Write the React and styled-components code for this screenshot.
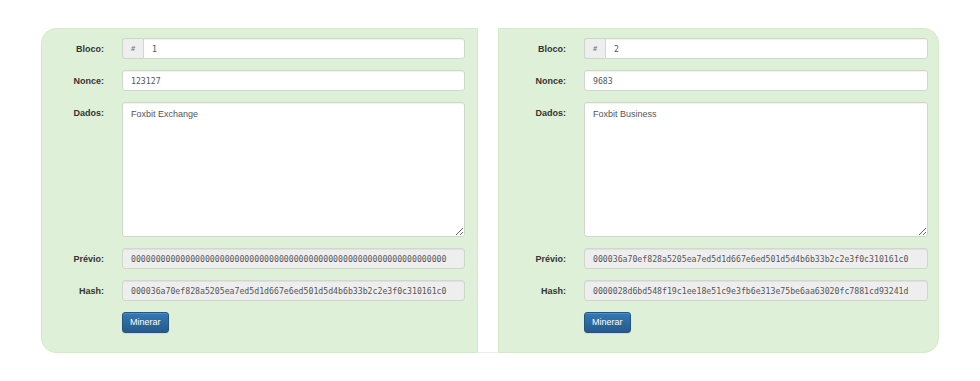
import React from 'react';
import styled, { createGlobalStyle } from 'styled-components';

const GlobalStyle = createGlobalStyle`
  html, body {
    margin: 0;
    padding: 0;
    background: #fff;
    font-family: "Liberation Sans", Arial, sans-serif;
  }
`;

const Page = styled.div`
  display: flex;
  padding: 28px 0 0 41px;
`;

const Card = styled.div`
  box-sizing: border-box;
  width: ${p => p.width}px;
  height: 325px;
  padding: 9px ${p => p.padRight}px 0 0;
  background: #dff0d8;
  border: 1px solid #d6e9c6;
  border-radius: ${p => p.side === 'left' ? '15px 0 0 15px' : '0 15px 15px 0'};
  display: grid;
  grid-template-columns: ${p => p.labelCol}px 1fr;
  grid-auto-rows: min-content;
  column-gap: 18px;
  row-gap: 11px;
`;

const Divider = styled.div`
  width: 20px;
  height: 325px;
  box-sizing: border-box;
  border-bottom: 1px solid #ececec;
  background: #fff;
`;

const Label = styled.label`
  text-align: right;
  font-size: 9px;
  font-weight: bold;
  color: #333;
  padding-top: 6px;
  line-height: 11px;
`;

const Group = styled.div`
  display: flex;
  height: 21px;
`;

const Addon = styled.span`
  box-sizing: border-box;
  width: 21px;
  display: flex;
  align-items: center;
  justify-content: center;
  background: #eee;
  border: 1px solid #ccd6c8;
  border-right: none;
  border-radius: 3px 0 0 3px;
  color: #777;
  font-size: 7px;
  font-family: "DejaVu Sans Mono", monospace;
`;

const Input = styled.input`
  box-sizing: border-box;
  flex: 1;
  min-width: 0;
  width: 100%;
  height: 21px;
  margin: 0;
  padding: 0 8px;
  border: 1px solid #cfd9cb;
  border-radius: ${p => (p.attached ? '0 3px 3px 0' : '3px')};
  background: ${p => (p.readOnly ? '#eee' : '#fff')};
  box-shadow: inset 0 1px 1px rgba(0, 0, 0, 0.06);
  color: #555;
  font-family: "DejaVu Sans Mono", monospace;
  font-size: 8.2px;
  outline: none;
`;

const TextArea = styled.textarea`
  box-sizing: border-box;
  width: 100%;
  height: 135px;
  margin: 0;
  padding: 5px 8px;
  border: 1px solid #cfd9cb;
  border-radius: 3px;
  background: #fff;
  box-shadow: inset 0 1px 1px rgba(0, 0, 0, 0.06);
  color: #555;
  font-family: "Liberation Sans", Arial, sans-serif;
  font-size: 9px;
  line-height: 12px;
  display: block;
  outline: none;
`;

const ButtonRow = styled.div`
  grid-column: 2;
  margin-top: -1px;
`;

const Button = styled.button`
  box-sizing: border-box;
  height: 21px;
  padding: 0 7px;
  border: 1px solid #245580;
  border-radius: 3px;
  background: linear-gradient(to bottom, #337ab7 0%, #265a88 100%);
  box-shadow: inset 0 1px 0 rgba(255, 255, 255, 0.15), 0 1px 1px rgba(0, 0, 0, 0.08);
  color: #fff;
  font-family: "Liberation Sans", Arial, sans-serif;
  font-size: 9px;
  cursor: pointer;
`;

const blocks = [
  {
    side: 'left',
    width: 437,
    labelCol: 62,
    padRight: 12,
    block: '1',
    nonce: '123127',
    data: 'Foxbit Exchange',
    prev: '0000000000000000000000000000000000000000000000000000000000000000',
    hash: '000036a70ef828a5205ea7ed5d1d667e6ed501d5d4b6b33b2c2e3f0c310161c0',
  },
  {
    side: 'right',
    width: 441,
    labelCol: 67,
    padRight: 10,
    block: '2',
    nonce: '9683',
    data: 'Foxbit Business',
    prev: '000036a70ef828a5205ea7ed5d1d667e6ed501d5d4b6b33b2c2e3f0c310161c0',
    hash: '0000028d6bd548f19c1ee18e51c9e3fb6e313e75be6aa63020fc7881cd93241d',
  },
];

function Block({ b }) {
  return (
    <Card side={b.side} width={b.width} labelCol={b.labelCol} padRight={b.padRight}>
      <Label>Bloco:</Label>
      <Group>
        <Addon>#</Addon>
        <Input attached defaultValue={b.block} />
      </Group>

      <Label>Nonce:</Label>
      <Input defaultValue={b.nonce} />

      <Label>Dados:</Label>
      <TextArea defaultValue={b.data} />

      <Label>Prévio:</Label>
      <Input readOnly value={b.prev} />

      <Label>Hash:</Label>
      <Input readOnly value={b.hash} />

      <ButtonRow>
        <Button>Minerar</Button>
      </ButtonRow>
    </Card>
  );
}

export default function App() {
  return (
    <>
      <GlobalStyle />
      <Page>
        <Block b={blocks[0]} />
        <Divider />
        <Block b={blocks[1]} />
      </Page>
    </>
  );
}
